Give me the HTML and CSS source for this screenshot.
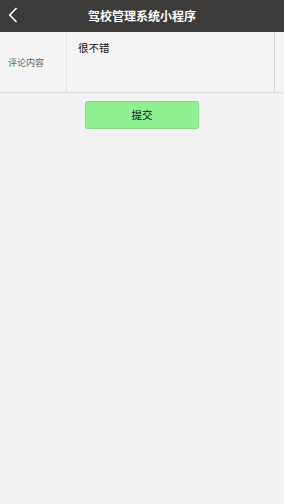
FILE: index.html
```html
<!DOCTYPE html>
<html>
<head>
<meta charset="utf-8">
<link rel="stylesheet" href="styles.css">
</head>
<body>
<header class="nav">
  <span class="back"><svg width="10" height="16" viewBox="0 0 10 16"><path d="M8.5 1 L1.8 8 L8.5 15" fill="none" stroke="#fff" stroke-width="1.6"/></svg></span>
  <h1 class="title">驾校管理系统小程序</h1>
</header>
<form class="form">
  <div class="row">
    <label class="label">评论内容</label>
    <div class="field">很不错</div>
  </div>
  <div class="actions">
    <button type="button" class="submit">提交</button>
  </div>
</form>
</body>
</html>
```
FILE: styles.css
```css
html, body {
  margin: 0;
  padding: 0;
  background: #f2f2f2;
  font-family: "Noto Sans CJK SC", "Liberation Sans", sans-serif;
  width: 284px;
  height: 504px;
}
.nav {
  height: 32px;
  background: #3c3b3a;
  display: flex;
  align-items: center;
  justify-content: center;
  position: relative;
}
.back {
  position: absolute;
  left: 8px;
  top: 7px;
  display: flex;
}
.title {
  margin: 0;
  color: #fff;
  font-size: 12px;
  font-weight: bold;
  line-height: 32px;
}
.form { margin: 0; }
.row {
  display: flex;
  height: 60px;
  background: #f5f5f5;
  border-bottom: 1px solid #d9d9d9;
}
.label {
  width: 67px;
  box-sizing: border-box;
  padding-left: 8px;
  display: flex;
  align-items: center;
  font-size: 9px;
  color: #666;
  border-right: 1px solid #e4e4e4;
}
.field {
  width: 208px;
  box-sizing: border-box;
  border-right: 1px solid #d9d9d9;
  padding: 9px 0 0 11px;
  font-size: 10.5px;
  color: #111;
  line-height: 14px;
}
.actions {
  display: flex;
  justify-content: center;
  padding-top: 8px;
}
.submit {
  width: 114px;
  height: 28px;
  background: #8ff08f;
  border: 1px solid #86e086;
  border-radius: 2px;
  font-family: "Noto Sans CJK SC", sans-serif;
  font-size: 10.5px;
  line-height: 26px;
  color: #111;
  padding: 0 0 1px 0;
}
```
